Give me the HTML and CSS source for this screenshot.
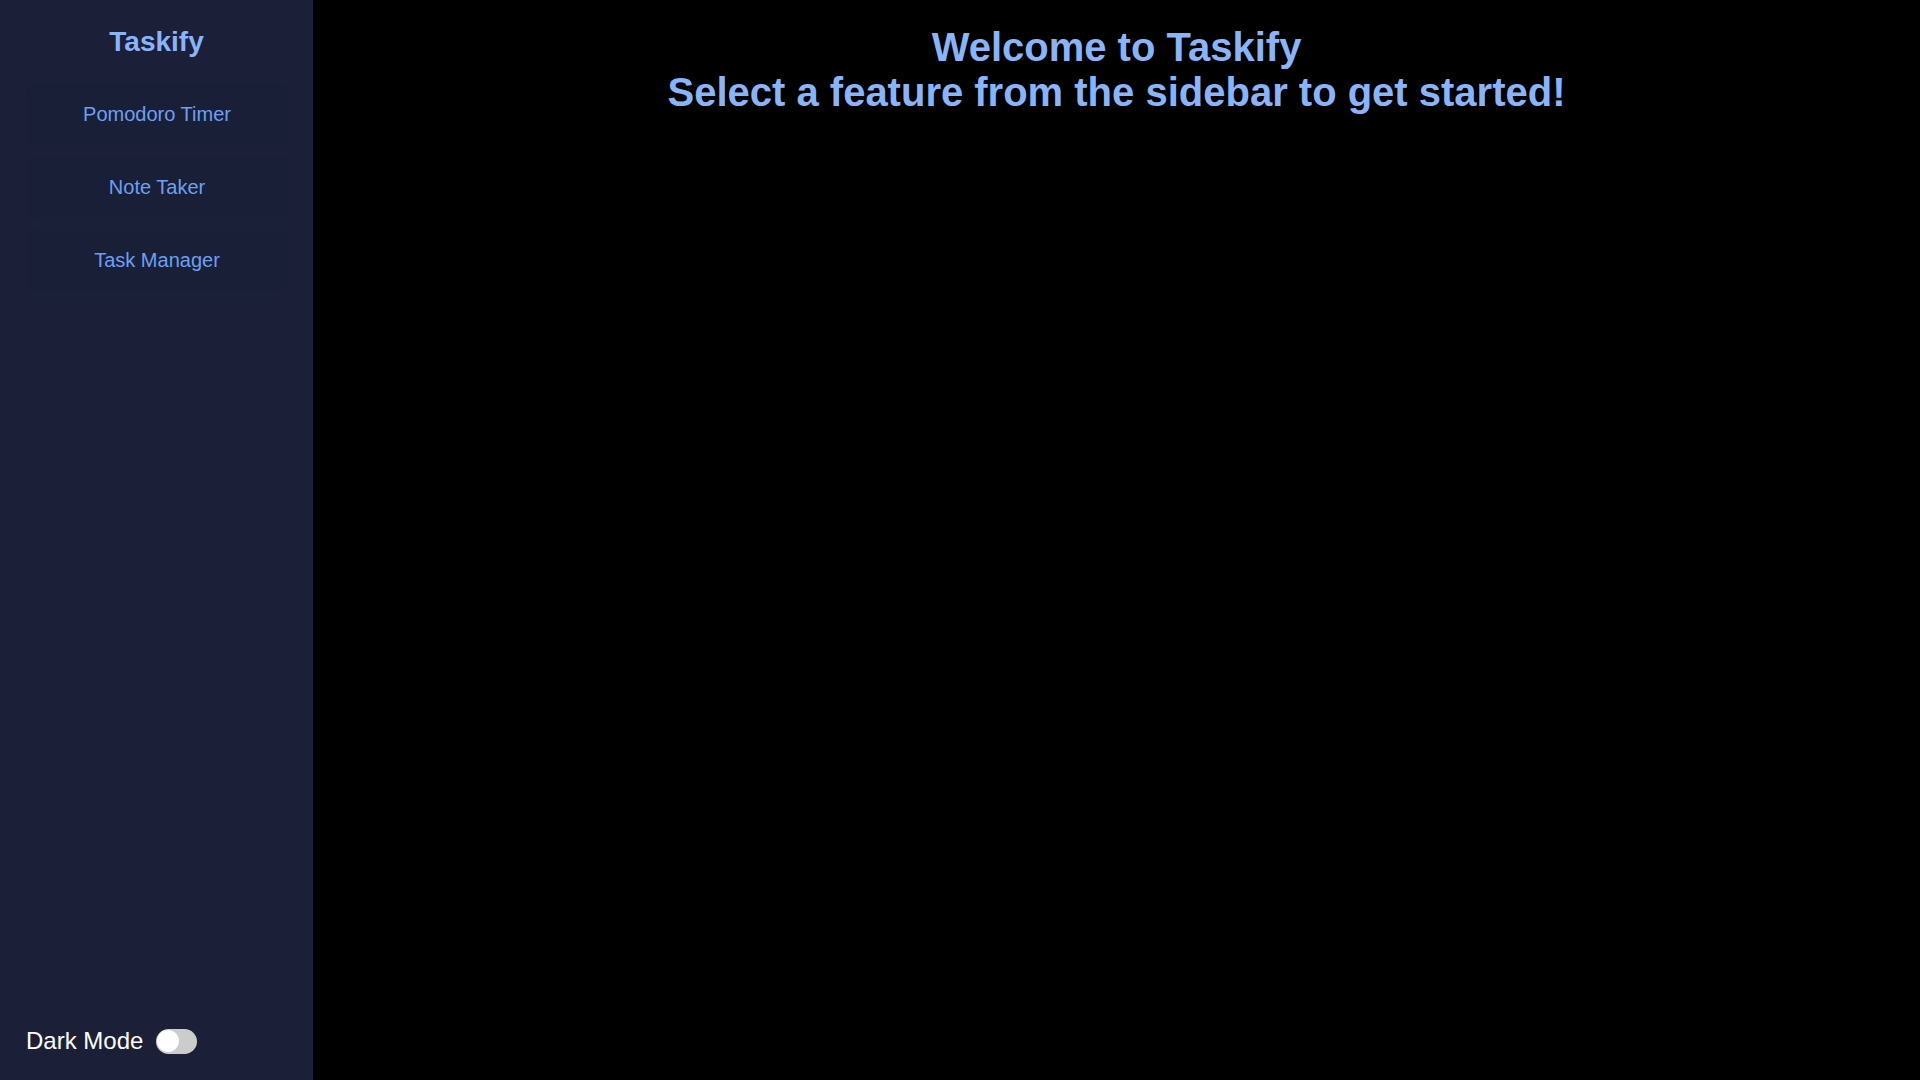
FILE: index.html
```html
<!DOCTYPE html>
<html lang="en">
<head>
<meta charset="utf-8">
<title>Taskify</title>
<link rel="stylesheet" href="styles.css">
</head>
<body>
<div class="app">
  <!-- sidebar -->
  <aside class="sidebar">
    <h2 class="brand">Taskify</h2>
    <nav class="menu">
      <button class="menu-item">Pomodoro Timer</button>
      <button class="menu-item">Note Taker</button>
      <button class="menu-item">Task Manager</button>
    </nav>
    <div class="theme-row">
      <span class="theme-label">Dark Mode</span>
      <label class="switch">
        <input type="checkbox">
        <span class="slider"></span>
      </label>
    </div>
  </aside>
  <!-- content -->
  <main class="content">
    <h1 class="welcome">Welcome to Taskify<br>Select a feature from the sidebar to get started!</h1>
  </main>
</div>
</body>
</html>
```

FILE: styles.css
```css
html, body
{
  margin: 0;
  height: 100%;
}
body
{
  font-family: "Liberation Sans", Arial, sans-serif;
  background: #000;
}

.app
{
  display: flex;
  height: 100vh;
}

.sidebar
{
  width: 313px;
  box-sizing: border-box;
  padding: 26px 26px 25px 26px;
  background: #1c1f38;
  display: flex;
  flex-direction: column;
}
.brand
{
  margin: 0 0 26px;
  font-size: 28px;
  font-weight: bold;
  text-align: center;
  color: #8ab4f8;
}

.menu
{
  display: flex;
  flex-direction: column;
  gap: 12px;
  padding-left: 1px;
}
.menu-item
{
  font-family: inherit;
  font-size: 20px;
  padding: 19px 0;
  border: none;
  border-radius: 8px;
  background: #181f37;
  color: #6f9ff0;
  cursor: pointer;
}

.theme-row
{
  margin-top: auto;
  display: flex;
  align-items: center;
  gap: 13px;
}
.theme-label
{
  font-size: 24px;
  color: #fff;
}
.switch
{
  position: relative;
  display: inline-block;
  width: 41px;
  height: 25px;
}
.switch input
{
  display: none;
}
.slider
{
  position: absolute;
  inset: 0;
  border-radius: 13px;
  background: #ccc;
  cursor: pointer;
}
.slider::before
{
  content: "";
  position: absolute;
  left: 1px;
  top: 1.5px;
  width: 22px;
  height: 22px;
  border-radius: 50%;
  background: #fff;
}

.content
{
  flex: 1;
  padding-top: 25px;
  text-align: center;
}
.welcome
{
  margin: 0;
  font-size: 40px;
  font-weight: bold;
  color: #8ab4f8;
}
```
